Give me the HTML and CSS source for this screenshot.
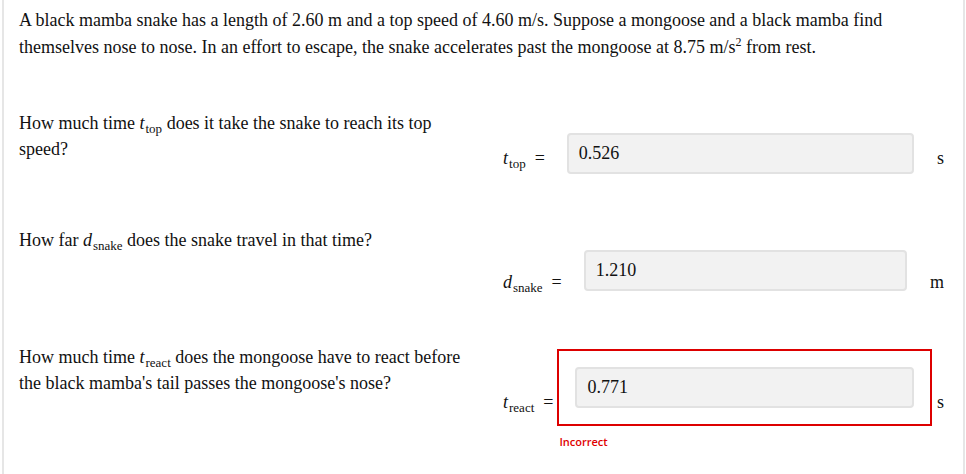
FILE: index.html
```html
<!DOCTYPE html>
<html>
<head>
<meta charset="utf-8">
<link rel="stylesheet" href="styles.css">
</head>
<body>
<div class="page">
  <p class="intro">A black mamba snake has a length of 2.60 m and a top speed of 4.60 m/s. Suppose a mongoose and a black mamba find themselves nose to nose. In an effort to escape, the snake accelerates past the mongoose at 8.75 m/s<sup>2</sup> from rest.</p>

  <div class="part">
    <div class="question">How much time <i>t</i><sub>top</sub> does it take the snake to reach its top speed?</div>
    <div class="answer">
      <span class="label label-1"><i>t</i><sub>top</sub><span class="eq">=</span></span>
      <div class="field-col">
        <div class="field"><div class="input">0.526</div></div>
      </div>
      <span class="unit label-1">s</span>
    </div>
  </div>

  <div class="part">
    <div class="question">How far <i>d</i><sub>snake</sub> does the snake travel in that time?</div>
    <div class="answer">
      <span class="label label-2"><i>d</i><sub>snake</sub><span class="eq">=</span></span>
      <div class="field-col">
        <div class="field"><div class="input">1.210</div></div>
      </div>
      <span class="unit label-2">m</span>
    </div>
  </div>

  <div class="part">
    <div class="question">How much time <i>t</i><sub>react</sub> does the mongoose have to react before the black mamba's tail passes the mongoose's nose?</div>
    <div class="answer">
      <span class="label label-3"><i>t</i><sub>react</sub><span class="eq">=</span></span>
      <div class="field-col">
        <div class="field field-wrong"><div class="input">0.771</div></div>
        <div class="feedback">Incorrect</div>
      </div>
      <span class="unit label-3">s</span>
    </div>
  </div>
</div>
</body>
</html>
```

FILE: styles.css
```css
html, body {
  margin: 0;
  padding: 0;
  background: #fff;
}
body {
  font-family: "Liberation Serif", "Times New Roman", serif;
  font-size: 18px;
  color: #111;
}
.page {
  margin: 0 1px 0 2px;
  border-left: 2px solid #e6e6e6;
  border-right: 2px solid #e6e6e6;
  padding: 7px 19px 0 15px;
  min-height: 100vh;
  box-sizing: border-box;
}
.intro {
  margin: 0 0 49px 0;
  line-height: 27px;
}
sup {
  font-size: 12px;
  line-height: 0;
  vertical-align: 7px;
}
sub {
  font-size: 13px;
  line-height: 0;
  vertical-align: -4px;
  margin-left: 1px;
}
.part {
  display: grid;
  grid-template-columns: 450px 1fr;
  column-gap: 34px;
  margin-bottom: 35px;
}
.question {
  line-height: 26px;
}
.answer {
  display: flex;
  align-items: flex-start;
  padding-top: 5px;
}
.label {
  white-space: nowrap;
  line-height: 20px;
  margin-right: 4px;
}
.eq {
  margin-left: 9px;
}
.label-1 { margin-top: 33px; }
.label-2 { margin-top: 40px; }
.label-3 { margin-top: 43px; }
.field-col {
  flex: 1;
}
.field {
  border: 2px solid transparent;
  padding: 16px;
}
.field-wrong {
  border-color: #dd0000;
}
.input {
  height: 41px;
  box-sizing: border-box;
  border: 2px solid #e2e2e2;
  border-radius: 4px;
  background: #f2f2f2;
  padding: 0 10px;
  display: flex;
  align-items: center;
  font-size: 18px;
  color: #111;
}
.unit {
  line-height: 20px;
  margin-left: 5px;
}
.feedback {
  margin-top: 8px;
  margin-left: 2px;
  line-height: 16px;
  font-family: "Open Sans", "Noto Sans", sans-serif;
  font-weight: 600;
  font-size: 11px;
  color: #e00000;
}
```
